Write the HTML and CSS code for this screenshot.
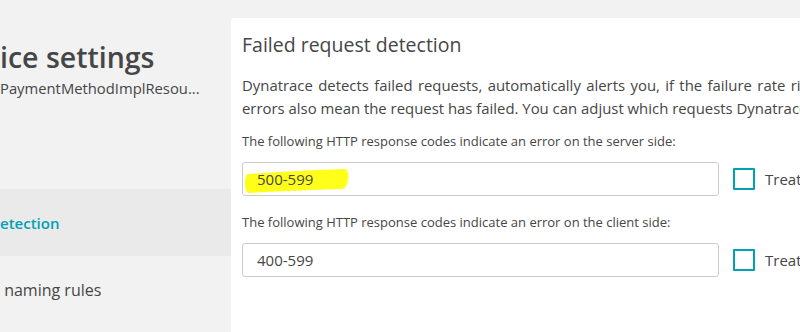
FILE: index.html
```
<!DOCTYPE html>
<html lang="en">

<head>
  <meta charset="UTF-8">
  <meta name="viewport" content="width=device-width, initial-scale=1.0">
  <title>Service settings</title>
  <link rel="stylesheet" href="styles.css">
</head>

<body>
  <div class="page">
    <div class="side">
      <div class="side_title">ice settings</div>
      <div class="side_sub">PaymentMethodImplResou...</div>
      <div class="menu">
        <div class="menu_item active">etection</div>
        <div class="menu_item">&nbsp;naming rules</div>
      </div>
    </div>

    <div class="card">
      <div class="card_title">Failed request detection</div>
      <p class="desc">
        <span class="line1">Dynatrace detects failed requests, automatically alerts you, if the failure rate rises.</span><br>
        errors also mean the request has failed. You can adjust which requests Dynatrace considers failed.
      </p>

      <div class="label">The following HTTP response codes indicate an error on the server side:</div>
      <div class="row">
        <div class="field">
          <svg class="marker" width="104" height="26" viewBox="0 0 104 26">
            <path d="M3 6 C30 4 70 2 99 1 C103 1 104 6 103 12 C102 18 100 21 96 21 C70 22 35 23 4 25 C1 25 0 20 0 15 C0 10 1 6 3 6 Z" fill="#ffff1a" />
          </svg>
          <span class="value">500-599</span>
        </div>
        <div class="check"></div>
        <div class="check_label">Treat</div>
      </div>

      <div class="label">The following HTTP response codes indicate an error on the client side:</div>
      <div class="row">
        <div class="field">
          <span class="value">400-599</span>
        </div>
        <div class="check"></div>
        <div class="check_label">Treat</div>
      </div>
    </div>
  </div>
</body>

</html>
```

FILE: styles.css
```
body {
  margin: 0;
  width: 800px;
  height: 332px;
  overflow: hidden;

  background-color: #f2f2f2;
  color: #454646;
  font-family: "Open Sans", Lato, sans-serif;
}

.page {
  display: flex;
  height: 332px;
}

.side {
  width: 231px;
  flex-shrink: 0;
}

.side_title {
  margin-top: 40px;
  font-size: 28.5px;
  font-weight: 600;
  line-height: 34px;
  white-space: nowrap;
}

.side_sub {
  margin-top: 5px;
  font-size: 14.8px;
  line-height: 18px;
  white-space: nowrap;
}

.menu {
  margin-top: 92px;
}

.menu_item {
  height: 67px;

  display: flex;
  align-items: center;

  font-size: 16px;
  white-space: nowrap;
}

.active {
  background-color: #eaeaea;
  color: #00a1b2;
  font-size: 15px;
  font-weight: 600;
}

.card {
  width: 569px;
  flex-shrink: 0;
  margin-top: 18px;
  padding: 15px 0 0 11px;
  overflow: hidden;

  background-color: white;
  border-radius: 3px 0 0 0;
}

.card_title {
  font-size: 19.5px;
  line-height: 24px;
  white-space: nowrap;
}

.desc {
  margin: 17px 0 0 0;
  font-size: 14.9px;
  line-height: 23px;
  white-space: nowrap;
}

.line1 {
  word-spacing: 1.5px;
}

.label {
  margin-top: 12px;
  font-size: 13px;
  line-height: 18px;
  white-space: nowrap;
}

.row {
  display: flex;
  align-items: center;
  margin: 12px 0 17px 0;
}

.field {
  width: 461px;
  height: 32px;
  flex-shrink: 0;

  display: flex;
  align-items: center;
  position: relative;

  padding-left: 14px;
  border: 1px solid #cccccc;
  border-radius: 3px;

  font-size: 15px;
}

.marker {
  position: absolute;
  left: 2px;
  top: 5px;
}

.value {
  position: relative;
}

.check {
  width: 18px;
  height: 18px;
  margin-left: 14px;
  flex-shrink: 0;

  border: 2px solid #00a1b2;
  border-radius: 1px;
}

.check_label {
  margin-left: 10px;
  font-size: 15px;
  white-space: nowrap;
}
```
